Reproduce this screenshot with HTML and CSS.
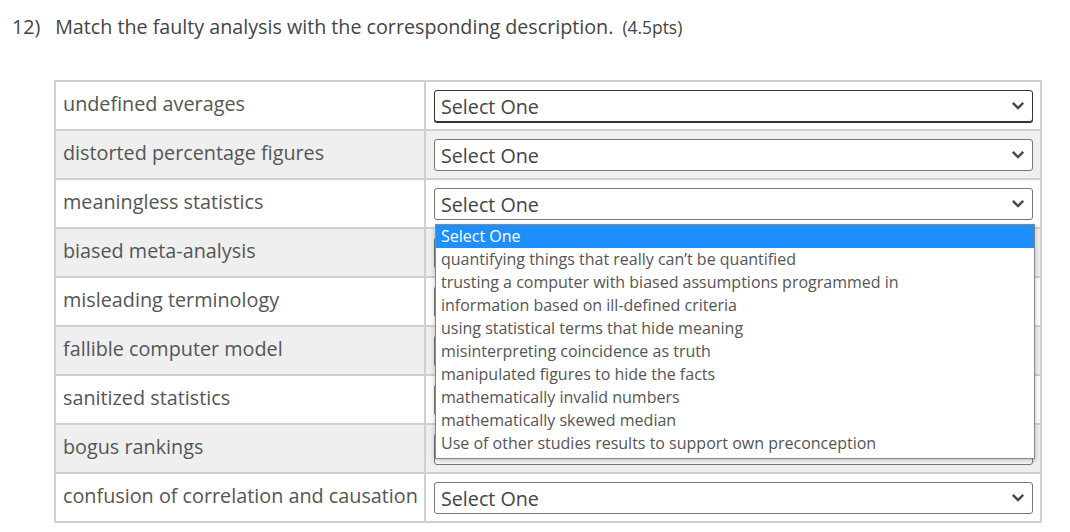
FILE: index.html
```html
<!DOCTYPE html>
<html>
<head>
<meta charset="utf-8">
<link rel="stylesheet" href="styles.css">
</head>
<body>
<div class="question">
  <span class="qnum">12)</span>
  <span class="qtext">Match the faulty analysis with the corresponding description.</span>
  <span class="pts">(4.5pts)</span>
</div>
<table class="match">
  <tr class="odd"><td class="label">undefined averages</td><td class="answer"><div class="select focused"><span>Select One</span><svg class="chev" width="14" height="9" viewBox="0 0 14 9"><path d="M1.8 1.8 L7 7 L12.2 1.8" fill="none" stroke="#4a4a4a" stroke-width="2.4"/></svg></div></td></tr>
  <tr class="even"><td class="label">distorted percentage figures</td><td class="answer"><div class="select"><span>Select One</span><svg class="chev" width="14" height="9" viewBox="0 0 14 9"><path d="M1.8 1.8 L7 7 L12.2 1.8" fill="none" stroke="#4a4a4a" stroke-width="2.4"/></svg></div></td></tr>
  <tr class="odd"><td class="label">meaningless statistics</td><td class="answer"><div class="select open"><span>Select One</span><svg class="chev" width="14" height="9" viewBox="0 0 14 9"><path d="M1.8 1.8 L7 7 L12.2 1.8" fill="none" stroke="#4a4a4a" stroke-width="2.4"/></svg>
    <ul class="listbox">
      <li class="active">Select One</li>
      <li>quantifying things that really can’t be quantified</li>
      <li>trusting a computer with biased assumptions programmed in</li>
      <li>information based on ill-defined criteria</li>
      <li>using statistical terms that hide meaning</li>
      <li>misinterpreting coincidence as truth</li>
      <li>manipulated figures to hide the facts</li>
      <li>mathematically invalid numbers</li>
      <li>mathematically skewed median</li>
      <li>Use of other studies results to support own preconception</li>
    </ul></div></td></tr>
  <tr class="even"><td class="label">biased meta-analysis</td><td class="answer"><div class="select"><span>Select One</span><svg class="chev" width="14" height="9" viewBox="0 0 14 9"><path d="M1.8 1.8 L7 7 L12.2 1.8" fill="none" stroke="#4a4a4a" stroke-width="2.4"/></svg></div></td></tr>
  <tr class="odd"><td class="label">misleading terminology</td><td class="answer"><div class="select"><span>Select One</span><svg class="chev" width="14" height="9" viewBox="0 0 14 9"><path d="M1.8 1.8 L7 7 L12.2 1.8" fill="none" stroke="#4a4a4a" stroke-width="2.4"/></svg></div></td></tr>
  <tr class="even"><td class="label">fallible computer model</td><td class="answer"><div class="select"><span>Select One</span><svg class="chev" width="14" height="9" viewBox="0 0 14 9"><path d="M1.8 1.8 L7 7 L12.2 1.8" fill="none" stroke="#4a4a4a" stroke-width="2.4"/></svg></div></td></tr>
  <tr class="odd"><td class="label">sanitized statistics</td><td class="answer"><div class="select"><span>Select One</span><svg class="chev" width="14" height="9" viewBox="0 0 14 9"><path d="M1.8 1.8 L7 7 L12.2 1.8" fill="none" stroke="#4a4a4a" stroke-width="2.4"/></svg></div></td></tr>
  <tr class="even"><td class="label">bogus rankings</td><td class="answer"><div class="select"><span>Select One</span><svg class="chev" width="14" height="9" viewBox="0 0 14 9"><path d="M1.8 1.8 L7 7 L12.2 1.8" fill="none" stroke="#4a4a4a" stroke-width="2.4"/></svg></div></td></tr>
  <tr class="odd"><td class="label">confusion of correlation and causation</td><td class="answer"><div class="select"><span>Select One</span><svg class="chev" width="14" height="9" viewBox="0 0 14 9"><path d="M1.8 1.8 L7 7 L12.2 1.8" fill="none" stroke="#4a4a4a" stroke-width="2.4"/></svg></div></td></tr>
</table>
</body>
</html>
```
FILE: styles.css
```css
body {
  margin: 0;
  background: #fff;
  font-family: "Open Sans", "Noto Sans", sans-serif;
  color: #444;
}
.question {
  padding: 13px 0 0 12px;
  height: 68px;
  box-sizing: border-box;
  font-size: 19.7px;
  color: #444;
  white-space: nowrap;
}
.qnum {
  display: inline-block;
  width: 38px;
}
.pts {
  font-size: 17.4px;
  margin-left: 4px;
}
.match {
  margin: 12px 0 0 54px;
  border-collapse: collapse;
  border: 2px solid #cfcfcf;
}
.match td {
  border: 2px solid #cfcfcf;
  height: 43px;
  padding: 0;
  vertical-align: middle;
}
.match tr.even td {
  background: #efefef;
}
.label {
  width: 355px;
  padding: 0 6px 4px 7px !important;
  font-size: 19.8px;
  line-height: 24px;
  color: #555;
  white-space: nowrap;
}
.answer {
  width: 599px;
  padding: 0 7px 0 8px !important;
}
.select {
  position: relative;
  height: 32px;
  box-sizing: border-box;
  border: 1px solid #777;
  border-radius: 3px;
  background: #fff;
  display: flex;
  align-items: center;
  justify-content: space-between;
  padding: 0 7px 0 6px;
  font-size: 19.7px;
  line-height: 24px;
  color: #444;
}
.select.focused {
  border-color: #333;
  box-shadow: 0 1px 0 #333;
}
.select span {
  margin-top: 2px;
}
.chev {
  display: block;
}
.listbox {
  position: absolute;
  top: 35px;
  left: 0;
  width: 600px;
  box-sizing: border-box;
  margin: 0;
  padding: 0 0 3px 0;
  list-style: none;
  background: #fff;
  border: 1px solid #888;
  box-shadow: 0 2px 5px rgba(0,0,0,0.25);
  z-index: 10;
  font-size: 16px;
  color: #555;
}
.listbox li {
  height: 23px;
  line-height: 22px;
  padding-left: 5px;
  white-space: nowrap;
}
.listbox li.active {
  background: #1e8fff;
  color: #fff;
}
```
